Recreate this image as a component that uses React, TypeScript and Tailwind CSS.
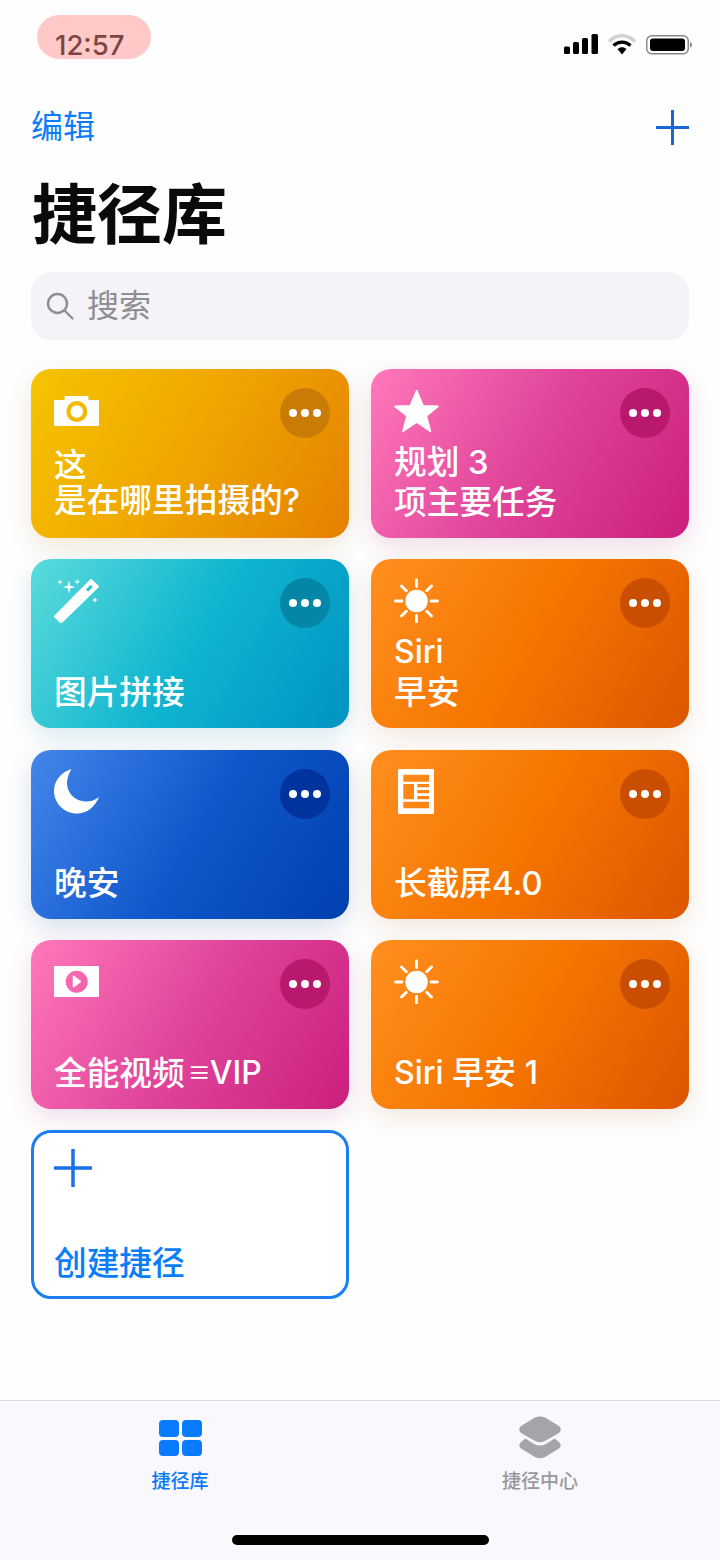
const FONT = "font-['Inter','Noto_Sans_CJK_SC',sans-serif]";

function Dots({ tint }: { tint: string }) {
  return (
    <div className={`flex h-[50px] w-[50px] items-center justify-center gap-[4px] rounded-full ${tint}`}>
      <span className="h-2 w-2 rounded-full bg-white" />
      <span className="h-2 w-2 rounded-full bg-white" />
      <span className="h-2 w-2 rounded-full bg-white" />
    </div>
  );
}

function Camera() {
  return (
    <svg width="45" height="45" viewBox="0 0 45 45">
      <path fill="#fff" fillRule="evenodd" d="M.8 12h9.700V9.500c0-1 .6-1.500 1.500-1.500h21c.9 0 1.500.5 1.500 1.500V12h9.700c.5 0 .8.3.8.8v24.400c0 .5-.3.8-.8.8H.8c-.5 0-.8-.3-.8-.8V12.800c0-.5.3-.8.8-.8Zm22 1a10.500 10.500 0 1 0 0 21 10.500 10.500 0 0 0 0-21Zm0 4.200a6.300 6.300 0 1 1 0 12.600 6.300 6.300 0 0 1 0-12.600Z" />
    </svg>
  );
}

function Star() {
  return (
    <svg width="45" height="45" viewBox="0 0 45 45">
      <path fill="#fff" stroke="#fff" strokeWidth="1.500" strokeLinejoin="round" d="M22.700 2.500l6.400 15.200 15 .6-11.700 9.700 4.100 15.400-13.800-9.300-13.800 9.300 4.100-15.400L1 18.300l15.300-.6z" />
    </svg>
  );
}

function Wand() {
  return (
    <svg width="45" height="45" viewBox="0 0 45 45">
      <path fill="#fff" stroke="#fff" strokeWidth="2" strokeLinejoin="round" d="M1 38.500 37 2l7 6.500L7 44.500Z" />
      <path fill="#25c2d4" d="M32 11.500 36.500 7l2.200 2-4.500 4.500Z" />
      <path fill="#fff" d="M15 2.500l1.300 5.200 5.200 1.300-5.200 1.300L15 15.500l-1.300-5.200L8.500 9l5.200-1.300ZM6 .8l.7 2.500 2.500.7-2.500.7L6 7.200l-.7-2.500L2.800 4l2.500-.7ZM23.300.5l.7 2.500 2.500.7-2.500.7-.7 2.500-.7-2.500-2.500-.7 2.500-.7ZM41 18.800l.7 2.500 2.500.7-2.500.7-.7 2.500-.7-2.500-2.500-.7 2.500-.7Z" />
    </svg>
  );
}

function Sun() {
  return (
    <svg width="45" height="45" viewBox="0 0 45 45">
      <circle cx="22.500" cy="23" r="11.200" fill="#fff" />
      <g stroke="#fff" strokeWidth="2.800" strokeLinecap="round">
        <path d="M22.500 2v6.500M22.500 37.500V44M1.500 23H8M37 23h6.500M7.500 8l4.800 4.800M32.700 33.200l4.800 4.800M7.500 38l4.800-4.800M32.700 12.800 37.500 8" />
      </g>
    </svg>
  );
}

function Moon() {
  return (
    <svg width="45" height="45" viewBox="0 0 45 45">
      <path fill="#fff" d="M17.500 0C7 3 0 12 0 22c0 12 10 22.500 23 22.500 10 0 18-6.500 22-16.500-4 3-8 4.500-13 4.500-11 0-19-8.500-19-18.500 0-5 2-10 4.500-14Z" />
    </svg>
  );
}

function Paper() {
  return (
    <svg width="45" height="45" viewBox="0 0 45 45">
      <path fill="#fff" fillRule="evenodd" d="M5 0h34c.6 0 1 .4 1 1v43c0 .6-.4 1-1 1H5c-.6 0-1-.4-1-1V1c0-.6.4-1 1-1Zm4.300 5.700v7H35v-7Zm0 9.300v15.300H20V15Zm14 0v3.300H35V15Zm0 6v3.300H35V21Zm0 6v3.300H35V27ZM9.300 32.700v6.600H35v-6.600Z" />
    </svg>
  );
}

function Video() {
  return (
    <svg width="45" height="45" viewBox="0 0 45 45">
      <path fill="#fff" fillRule="evenodd" d="M1 7h43c.6 0 1 .4 1 1v29c0 .6-.4 1-1 1H1c-.6 0-1-.4-1-1V8c0-.6.4-1 1-1Zm21.700 4.700a11 11 0 1 0 0 22 11 11 0 0 0 0-22Z" />
      <path fill="#fff" d="M18.700 17.500c0-.8.8-1.200 1.400-.8l6.600 5c.5.400.5 1.200 0 1.600l-6.600 5c-.6.400-1.400 0-1.400-.8Z" />
    </svg>
  );
}

const orange = "bg-[linear-gradient(120deg,#ff8f1f_0%,#f57500_50%,#dc5600_100%)]";
const pink = "bg-[linear-gradient(120deg,#ff78ba_0%,#e0449a_50%,#cb1f7c_100%)]";

const cards = [
  { icon: <Camera />, lines: ["这", "是在哪里拍摄的?"], leading: "leading-[35px]", pb: "pb-[20px]", bg: "bg-[linear-gradient(120deg,#f5c400_0%,#efa500_50%,#e58000_100%)]", tint: "bg-[#c97c05]", shadow: "shadow-[0_8px_24px_rgba(160,110,20,0.16)]" },
  { icon: <Star />, lines: ["规划 3", "项主要任务"], leading: "leading-[40px]", pb: "pb-[16px]", bg: pink, tint: "bg-[#b9196d]", shadow: "shadow-[0_8px_24px_rgba(170,40,120,0.16)]" },
  { icon: <Wand />, lines: ["图片拼接"], leading: "leading-[40px]", pb: "pb-[16px]", bg: "bg-[linear-gradient(120deg,#5adbdb_0%,#10b5d0_50%,#0093c2_100%)]", tint: "bg-[#0487a6]", shadow: "shadow-[0_8px_24px_rgba(0,120,160,0.16)]" },
  { icon: <Sun />, lines: ["Siri", "早安"], leading: "leading-[40px]", pb: "pb-[16px]", bg: orange, tint: "bg-[#c94e00]", shadow: "shadow-[0_8px_24px_rgba(170,90,20,0.14)]" },
  { icon: <Moon />, lines: ["晚安"], leading: "leading-[40px]", pb: "pb-[16px]", bg: "bg-[linear-gradient(120deg,#4486ea_0%,#1058cc_50%,#003fae_100%)]", tint: "bg-[#00349c]", shadow: "shadow-[0_8px_24px_rgba(0,60,150,0.16)]" },
  { icon: <Paper />, lines: ["长截屏4.0"], leading: "leading-[40px]", pb: "pb-[16px]", bg: orange, tint: "bg-[#c94e00]", shadow: "shadow-[0_8px_24px_rgba(170,90,20,0.14)]" },
  { icon: <Video />, lines: ["全能视频|VIP"], leading: "leading-[40px]", pb: "pb-[16px]", bg: pink, tint: "bg-[#b9196d]", shadow: "shadow-[0_8px_24px_rgba(170,40,120,0.16)]" },
  { icon: <Sun />, lines: ["Siri 早安 1"], leading: "leading-[40px]", pb: "pb-[16px]", bg: orange, tint: "bg-[#c94e00]", shadow: "shadow-[0_8px_24px_rgba(170,90,20,0.14)]" },
];

function Line({ text }: { text: string }) {
  if (text.startsWith("Siri")) return <div className="text-[32px]">{text}</div>;
  if (text.includes("|")) {
    const [a, b] = text.split("|");
    return (
      <div className="flex items-center">
        {a}
        <span className="ml-[3px] w-[22px] text-[23px]">≡</span>
        <span className="text-[32px]">{b}</span>
      </div>
    );
  }
  return <div>{text}</div>;
}

export default function App() {
  return (
    <div className={`flex h-[1560px] w-[720px] flex-col overflow-hidden bg-[#fefefe] ${FONT}`}>
      {/* status bar */}
      <div className="flex h-[60px] shrink-0 items-start justify-between pl-[37px] pr-[28px] pt-[15px]">
        <div className="flex h-[44px] w-[114px] items-center rounded-[22px] bg-[#ffc9c7] pl-[18px] pt-[16px] text-[27.500px] font-medium leading-[28px] text-[#7b4644]">12:57</div>
        <div className="mt-[18px] flex items-start">
          <svg width="34" height="22" viewBox="0 0 34 22">
            <rect x="0" y="13.500" width="6" height="7.500" rx="1.500" />
            <rect x="9" y="9" width="6" height="12" rx="1.500" />
            <rect x="18" y="5" width="6" height="16" rx="1.500" />
            <rect x="27.500" y="1" width="6.500" height="20" rx="1.500" />
          </svg>
          <svg className="ml-[10px]" width="28" height="22" viewBox="0 0 28 22">
            <path d="M1 8.500C8.500 .8 19.500 .8 27 8.500" fill="none" stroke="#d2d2d2" strokeWidth="3.600" />
            <path d="M5.500 12.500c5-4.500 12-4.500 17 0" fill="none" stroke="#000" strokeWidth="3.400" />
            <path d="M9.500 16c3-2.300 6-2.300 9 0l-4.500 5.500Z" fill="#000" />
          </svg>
          <svg className="ml-[10px] mt-[2px]" width="46" height="20" viewBox="0 0 46 20">
            <rect x="0.750" y="0.750" width="41.500" height="18" rx="5" fill="none" stroke="#8a8a8a" strokeWidth="1.500" />
            <rect x="4" y="3.500" width="35" height="12.500" rx="3" fill="#000" />
            <path d="M44 7c1.200.4 2 1.500 2 2.800s-.8 2.400-2 2.800Z" fill="#8a8a8a" />
          </svg>
        </div>
      </div>

      {/* nav */}
      <div className="mt-[46px] flex h-[42px] shrink-0 items-center justify-between pl-[31px] pr-[31px]">
        <span className="text-[32px] leading-[42px] text-[#0a7dfa]">编辑</span>
        <svg width="33" height="35" viewBox="0 0 33 35">
          <path d="M16.500 0v35M0 17.500h33" stroke="#1a68d8" strokeWidth="3" />
        </svg>
      </div>

      <h1 className="ml-[32px] mt-[31px] shrink-0 text-[65px] font-bold leading-[72px] text-[#0a0a0a]">捷径库</h1>

      {/* search */}
      <div className="mx-[31px] mt-[21px] flex h-[68px] shrink-0 items-center gap-[13px] rounded-[20px] bg-[#f4f3f7] pl-[15px]">
        <svg width="28" height="28" viewBox="0 0 28 28" fill="none" stroke="#8e8e93" strokeWidth="2.400" strokeLinecap="round">
          <circle cx="11.500" cy="11.500" r="9.500" />
          <path d="M18.500 18.500l8 8" />
        </svg>
        <span className="text-[32px] leading-[42px] text-[#8e8e93]">搜索</span>
      </div>

      {/* shortcuts */}
      <div className="mx-[31px] mt-[29px] grid grid-cols-2 gap-x-[22px] gap-y-[21.300px]">
        {cards.map((c, i) => (
          <div key={i} className={`flex h-[169px] flex-col justify-between rounded-[20px] pl-[23px] pr-[19px] pt-[19px] ${c.pb} ${c.bg} ${c.shadow}`}>
            <div className="flex items-start justify-between">
              {c.icon}
              <Dots tint={c.tint} />
            </div>
            <div className={`text-[32.700px] font-medium text-white ${c.leading}`}>
              {c.lines.map((l) => (
                <Line key={l} text={l} />
              ))}
            </div>
          </div>
        ))}
        <div className="flex h-[169px] flex-col justify-between rounded-[20px] border-[3px] border-[#1a7ef0] bg-white pb-[13px] pl-[20px] pt-[16px]">
          <svg width="38" height="38" viewBox="0 0 38 38">
            <path d="M19 0v38M0 19h38" stroke="#1a72e8" strokeWidth="3.500" />
          </svg>
          <span className="text-[32.700px] font-medium leading-[40px] text-[#0a7dfa]">创建捷径</span>
        </div>
      </div>

      {/* tab bar */}
      <div className="mt-auto flex h-[160px] shrink-0 flex-col border-t-[1.500px] border-[#dcdce0] bg-[#f9f8fc]">
        <div className="grid grid-cols-2">
          <div className="flex flex-col items-center pt-[19px]">
            <div className="grid h-[36px] w-[43px] grid-cols-2 gap-[3px]">
              <span className="rounded-[4px] bg-[#0a7aff]" />
              <span className="rounded-[4px] bg-[#0a7aff]" />
              <span className="rounded-[4px] bg-[#0a7aff]" />
              <span className="rounded-[4px] bg-[#0a7aff]" />
            </div>
            <span className="mt-[13px] text-[19px] font-medium leading-[26px] text-[#0a7aff]">捷径库</span>
          </div>
          <div className="flex flex-col items-center pt-[15px]">
            <svg width="44" height="43" viewBox="0 0 44 43">
              <path fill="#a5a4a8" d="M17 1.500Q22-.5 27 1.500L41 10Q44.500 13.500 41 17L27 25Q22 27.500 17 25L3 17Q-.5 13.500 3 10Z" />
              <path fill="#a5a4a8" d="M7.500 22.500 16 28Q22 31 28 28L36.500 22.500 41 26Q44.500 29.500 41 32.500L27 41Q22 43.500 17 41L3 32.500Q-.5 29.500 3 26Z" />
            </svg>
            <span className="mt-[10px] text-[19px] font-medium leading-[26px] text-[#98979b]">捷径中心</span>
          </div>
        </div>
        <div className="mt-auto mb-[15px] h-[10px] w-[257px] self-center rounded-full bg-black" />
      </div>
    </div>
  );
}
